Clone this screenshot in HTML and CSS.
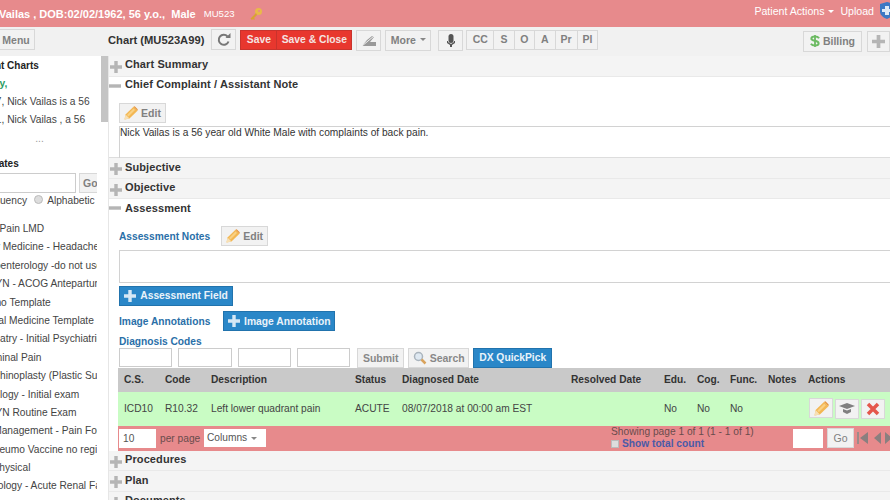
FILE: index.html
```html
<!DOCTYPE html>
<html lang="en">
<head>
<meta charset="utf-8">
<title>Chart</title>
<link rel="stylesheet" href="styles.css">
</head>
<body>
<svg class="defs" width="0" height="0" aria-hidden="true">
  <symbol id="plus" viewBox="0 0 14 14"><path d="M5 0h4v5h5v4H9v5H5V9H0V5h5z" fill="#b5b5b5"/></symbol>
  <symbol id="minus" viewBox="0 0 14 14"><rect y="5" width="14" height="4" fill="#b5b5b5"/></symbol>
  <symbol id="pencil" viewBox="0 0 14 14"><path d="M0.500 13.500l1-5L9.500 .8l4 4-8 7.700z" fill="#f3b753"/><path d="M.5 13.500l1-5 4 4z" fill="#f7e0b5"/><path d="M3 9l6.500-6.500 1.500 1.500L4.500 10.500z" fill="#f9d184"/><path d="M9.500 .8l1.200-.5 3 3-.2 1.500z" fill="#e5923a"/></symbol>
  <symbol id="wplus" viewBox="0 0 14 14"><path d="M5 0h4v5h5v4H9v5H5V9H0V5h5z" fill="#d6e8f5"/></symbol>
</svg>
<header class="topbar">
  <div class="patient">Vailas , DOB:02/02/1962, 56 y.o., &nbsp;Male <span class="mrn">MU523</span>
    <svg class="key" width="14" height="14" viewBox="0 0 14 14"><circle cx="9.500" cy="4.500" r="3.500" fill="#e9b949"/><path d="M7 6L1.500 11.500 3 13l1-1 1 1 1-1-1-1 3-3z" fill="#d9a233"/><circle cx="10" cy="4" r="1" fill="#e88a8c"/></svg>
  </div>
  <nav class="topnav">
    <span>Patient Actions <i class="caret"></i></span>
    <span>Upload</span>
    <svg class="shield" width="14" height="17" viewBox="0 0 14 17"><path d="M0 2l7-2 7 2v8c0 3-4 6-7 7-3-1-7-4-7-7z" fill="#3d78c4"/><path d="M5 4h4v3h3v3H9v3H5v-3H2V7h3z" fill="#dfeaf6"/></svg>
  </nav>
</header>
<div class="toolbar">
  <button class="btn menu">Menu</button>
  <strong class="chart-title">Chart (MU523A99)</strong>
  <button class="btn refresh"><svg width="14" height="14" viewBox="0 0 14 14"><path d="M11.500 8.500A5 5 0 1 1 10.500 3.500" fill="none" stroke="#777" stroke-width="2"/><path d="M8.500 5h5V0z" fill="#777"/></svg></button>
  <div class="save-group"><button class="save">Save</button><button class="saveclose">Save &amp; Close</button></div>
  <button class="btn sign"><svg width="16" height="12" viewBox="0 0 16 12"><path d="M1 11l5-6 5-4 2 1-4 5 6 0v4z" fill="#999"/><path d="M1 11L13 1" stroke="#eee"/></svg></button>
  <button class="btn more">More <i class="caret dark"></i></button>
  <button class="btn mic"><svg width="8" height="13" viewBox="0 0 8 13"><rect x="1.500" width="5" height="9" rx="2.500" fill="#555"/><path d="M0 7h1v1l3 2 3-2V7h1v2l-3 2v2H3v-2L0 9z" fill="#555"/></svg></button>
  <div class="seg"><span class="s-cc">CC</span><span class="s-s">S</span><span class="s-o">O</span><span class="s-a">A</span><span class="s-pr">Pr</span><span class="s-pl">Pl</span></div>
  <div class="toolbar-right">
    <button class="btn billing"><svg width="10" height="12" viewBox="0 0 11 13"><path d="M10 3.500C9 2 7.500 1.500 5.500 1.500 3 1.500 1.500 2.500 1.500 4 1.500 7 9.500 5.500 9.500 9 9.500 10.500 8 11.500 5.500 11.500 3.500 11.500 2 11 1 9.500" fill="none" stroke="#6dbb63" stroke-width="2.200"/><rect x="4.500" width="2" height="13" fill="#6dbb63"/></svg> Billing</button>
    <button class="btn addbtn"><svg width="13" height="13"><use href="#plus"/></svg></button>
  </div>
</div>
<div class="workspace">
  <aside class="sidebar">
    <div class="side-clip">
      <div class="side-inner">
        <h4 class="recent-title">Recent Charts</h4>
        <p class="green">Today,</p>
        <p class="note">08/07, Nick Vailas is a 56</p>
        <p class="note">08/01, Nick Vailas , a 56</p>
        <p class="dots">...</p>
        <h4 class="tmpl-title">Templates</h4>
        <div class="tmpl-search"><input class="tmpl-input" type="text"><button class="btn go">Go</button></div>
        <div class="sort"><i class="radio first"></i><span>Frequency</span><i class="radio"></i><span>Alphabetic</span></div>
        <ul class="tmpl-list">
          <li>Chest Pain LMD</li>
          <li>Family Medicine - Headache</li>
          <li>Gastroenterology -do not use</li>
          <li>OB/GYN - ACOG Antepartum</li>
          <li>Mammo Template</li>
          <li>General Medicine Template</li>
          <li>Psychiatry - Initial Psychiatric</li>
          <li>Abdominal Pain</li>
          <li>Septorhinoplasty (Plastic Surgery)</li>
          <li>Cardiology - Initial exam</li>
          <li>OB/GYN Routine Exam</li>
          <li>Pain Management - Pain Form</li>
          <li>Flu Pneumo Vaccine no regimen</li>
          <li>Well Physical</li>
          <li>Nephrology - Acute Renal Failure</li>
        </ul>
      </div>
    </div>
    <div class="scrollbar"></div>
  </aside>
  <main class="main">
    <div class="sec closed"><svg class="ico"><use href="#plus"/></svg>Chart Summary</div>
    <div class="sec open chief"><svg class="ico"><use href="#minus"/></svg>Chief Complaint / Assistant Note</div>
    <div class="panel cc">
      <button class="btn edit"><svg width="14" height="14"><use href="#pencil"/></svg> Edit</button>
      <div class="notebox short">Nick Vailas is a 56 year old White Male with complaints of back pain.</div>
    </div>
    <div class="sec closed"><svg class="ico"><use href="#plus"/></svg>Subjective</div>
    <div class="sec closed"><svg class="ico"><use href="#plus"/></svg>Objective</div>
    <div class="sec open"><svg class="ico"><use href="#minus"/></svg>Assessment</div>
    <div class="panel assess">
      <div class="label-row"><span class="blue-label">Assessment Notes</span><button class="btn edit"><svg width="14" height="14"><use href="#pencil"/></svg> Edit</button></div>
      <div class="notebox tall"></div>
      <button class="btn primary field"><svg width="12" height="12"><use href="#wplus"/></svg> Assessment Field</button>
      <div class="label-row img-row"><span class="blue-label">Image Annotations</span><button class="btn primary"><svg width="12" height="12"><use href="#wplus"/></svg> Image Annotation</button></div>
      <div class="blue-label dx-label">Diagnosis Codes</div>
      <div class="dx-row">
        <input class="dx" type="text"><input class="dx" type="text"><input class="dx" type="text"><input class="dx" type="text">
        <button class="btn soft submit">Submit</button>
        <button class="btn soft search"><svg width="14" height="14" viewBox="0 0 14 14"><circle cx="5.500" cy="5.500" r="4" fill="#dfe9f2" stroke="#aab4bd" stroke-width="1.500"/><path d="M8.500 8.500l4 4" stroke="#d9a35c" stroke-width="2.500"/></svg> Search</button>
        <button class="btn primary quick">DX QuickPick</button>
      </div>
      <table class="grid">
        <colgroup><col class="c1"><col class="c2"><col class="c3"><col class="c4"><col class="c5"><col class="c6"><col class="c7"><col class="c8"><col class="c9"><col class="c10"><col></colgroup>
        <thead><tr><th>C.S.</th><th>Code</th><th>Description</th><th>Status</th><th>Diagnosed Date</th><th>Resolved Date</th><th>Edu.</th><th>Cog.</th><th>Func.</th><th>Notes</th><th>Actions</th></tr></thead>
        <tbody><tr>
          <td>ICD10</td><td>R10.32</td><td>Left lower quadrant pain</td><td>ACUTE</td><td>08/07/2018 at 00:00 am EST</td><td></td><td>No</td><td>No</td><td>No</td><td></td>
          <td class="actions">
            <button class="btn act"><svg width="15" height="15"><use href="#pencil"/></svg></button>
            <button class="btn act"><svg width="16" height="14" viewBox="0 0 16 14"><path d="M0 4l8-3 8 3-8 3z" fill="#808080"/><path d="M4 7l4 1.500L12 7v3l-4 2-4-2z" fill="#808080"/></svg></button>
            <button class="btn act"><svg width="14" height="14" viewBox="0 0 14 14"><path d="M2 2l10 10M12 2L2 12" stroke="#e4574c" stroke-width="3.500"/></svg></button>
          </td>
        </tr></tbody>
      </table>
      <div class="pager">
        <input class="perpage" type="text" value="10">
        <span class="pp-label">per page</span>
        <span class="columns">Columns <i class="caret dark"></i></span>
        <div class="showing"><div>Showing page 1 of 1 (1 - 1 of 1)</div><label><i class="check"></i><b>Show total count</b></label></div>
        <input class="pageno" type="text">
        <button class="btn gobtn">Go</button>
        <svg class="nav" width="34" height="14" viewBox="0 0 34 14"><rect x="0" y="1" width="2" height="12" fill="#9c8a8a"/><path d="M11 1v12L3 7zM24 1v12l-7-6zM28 1v12l7-6z" fill="#8a7f7f"/></svg>
      </div>
    </div>
    <div class="sec closed"><svg class="ico"><use href="#plus"/></svg>Procedures</div>
    <div class="sec closed"><svg class="ico"><use href="#plus"/></svg>Plan</div>
    <div class="sec closed"><svg class="ico"><use href="#plus"/></svg>Documents</div>
  </main>
</div>
</body>
</html>
```
FILE: styles.css
```css
* { box-sizing: border-box; }
html, body { margin: 0; height: 100%; overflow: hidden; }
body { width: 890px; height: 500px; background: #fff; font: 10.200px "Liberation Sans", Arial, sans-serif; color: #333; }
.defs { position: absolute; }
button { font-family: inherit; }
svg { flex: none; }

.topbar { height: 27px; background: #e78a8c; color: #fff; display: flex; justify-content: space-between; align-items: center; overflow: hidden; }
.patient { margin-left: -1px; font-size: 11px; font-weight: bold; white-space: nowrap; display: flex; align-items: center; gap: 4px; height: 25px; }
.mrn { font-weight: normal; font-size: 9.600px; margin-left: 4px; }
.key { margin-left: 10px; }
.topnav { display: flex; align-items: center; font-size: 10.600px; white-space: nowrap; margin-top: -6px; }
.topnav span:first-child { margin-right: 6px; }
.shield { margin: 0 -4px 0 6px; }
.caret { display: inline-block; width: 0; height: 0; border: 3px solid transparent; border-top-color: #fff; border-bottom: 0; vertical-align: middle; margin-left: 1px; }
.caret.dark { border-top-color: #888; }

.toolbar { height: 29px; background: #f1f1f1; display: flex; align-items: flex-start; white-space: nowrap; padding-top: 3px; }
.btn { border: 1px solid #d8d8d8; background: #f2f2f2; color: #808080; font-size: 10.500px; font-weight: bold; height: 20px; padding: 0 5px; display: inline-flex; align-items: center; justify-content: center; gap: 3px; white-space: nowrap; }
.menu { width: 38px; margin-left: -3px; margin-top: -1px; height: 21px; }
.chart-title { margin-left: 73px; font-size: 11.200px; color: #333; line-height: 21px; }
.refresh { width: 25px; height: 21px; margin-left: 7px; margin-top: -1px; }
.save-group { display: flex; margin-left: 4px; height: 20px; width: 112px; background: #e8372e; border: 1px solid #c9332c; }
.save-group button { border: 0; background: transparent; color: #f4e4e2; font-size: 10.300px; font-weight: bold; padding: 0 0 2px; }
.save { width: 35px; }
.saveclose { flex: 1; border-left: 1px solid #c9332c !important; }
.sign { width: 25px; height: 21px; margin-left: 4px; padding: 0; }
.more { width: 46px; height: 21px; margin-left: 4px; padding: 0 0 2px; }
.mic { width: 25px; height: 21px; margin-left: 7px; padding: 0; }
.seg { display: flex; margin-left: 3px; height: 20px; width: 132px; border: 1px solid #d8d8d8; background: #f2f2f2; color: #808080; font-weight: bold; font-size: 10.500px; }
.seg span { line-height: 17px; border-left: 1px solid #d8d8d8; text-align: center; }
.seg span:first-child { border-left: 0; }
.s-cc { width: 26px; } .s-s { width: 21px; } .s-o { width: 20px; } .s-a { width: 21px; } .s-pr { width: 22px; } .s-pl { width: 21px; }
.toolbar-right { margin-left: auto; display: flex; gap: 5px; margin-top: 1px; }
.billing { width: 59px; height: 21px; font-size: 10.500px; padding: 0 0 1px; }
.addbtn { width: 23px; height: 21px; padding: 0; }

.workspace { display: flex; height: 444px; }
.sidebar { width: 109px; flex: none; position: relative; overflow: hidden; border-right: 1px solid #e6e6e6; }
.side-clip { width: 97px; height: 100%; overflow: hidden; }
.side-inner { width: 200px; margin-left: -30px; color: #444; white-space: nowrap; }
.recent-title, .tmpl-title { margin: 0; font-size: 10px; font-weight: bold; color: #222; line-height: 13px; }
.recent-title { padding-top: 3px; margin-left: 1px; }
.side-inner p { margin: 0 0 0 6px; line-height: 18px; }
.green { color: #2a9d63; font-weight: bold; margin-top: 3px !important; }
.dots { width: 127px; text-align: center; color: #999; margin-top: 1px !important; }
.tmpl-title { margin-top: 9px; }
.tmpl-search { display: flex; margin-top: 3px; height: 20px; }
.tmpl-input { width: 106px; height: 20px; border: 1px solid #ccc; }
.go { width: 24px; height: 20px; margin-left: 3px; padding: 0 3px; justify-content: flex-start; }
.sort { display: flex; align-items: center; height: 15px; }
.radio { width: 9px; height: 9px; border-radius: 50%; background: #ddd; border: 1px solid #bbb; margin: -3px 4px 0 7px; flex: none; }
.radio.first { margin-left: 0; margin-right: 0; }
.tmpl-list { list-style: none; padding: 0; margin: 12px 0 0; }
.tmpl-list li { line-height: 18.400px; height: 18.400px; }
.scrollbar { position: absolute; left: 101px; top: 0; width: 7px; height: 66px; background: #c4c4c4; }

.main { flex: 1; min-width: 0; overflow: hidden; }
.sec { height: 20.500px; display: flex; align-items: center; font-size: 11px; font-weight: bold; color: #333; border-bottom: 1px solid #e9e9e9; white-space: nowrap; letter-spacing: .1px; padding: 0 0 2px 16px; position: relative; }
.sec:first-child { padding-bottom: 4px; }
.sec.closed { background: #f4f4f4; }
.sec.open { background: #fff; border-bottom: 0; }
.sec.chief { padding-bottom: 6px; }
.ico { position: absolute; left: 1px; top: 5px; width: 12px; height: 12px; }
.open .ico { top: 3px; left: 0; }
.panel { padding-left: 10px; }
.cc { height: 61px; padding-top: 6px; border-bottom: 1px solid #ddd; }
.edit { height: 20px; width: 47px; padding: 0; }
.notebox { border: 1px solid #d2d2d2; border-right: 0; font-size: 10.200px; color: #333; line-height: 12px; padding: 0; }
.short { height: 32px; margin-top: 3px; border-bottom: 0; }
.assess { padding-top: 6px; }
.label-row { display: flex; align-items: center; height: 21px; gap: 11px; }
.blue-label { color: #2a6fa8; font-size: 10.200px; font-weight: bold; white-space: nowrap; }
.tall { height: 33px; margin-top: 3px; }
.primary { background: #2a87c8; border: 1px solid #2173ad; color: #e9f3fa; height: 20px; font-size: 10.300px; padding: 0; gap: 4px; }
.field { width: 114px; margin-top: 3px; display: flex; }
.img-row { margin-top: 5px; gap: 13px; }
.img-row .primary { width: 112px; }
.dx-label { line-height: 13px; margin-top: 3px; }
.dx-row { display: flex; align-items: flex-start; height: 20px; }
.dx { width: 53.300px; height: 19px; border: 1px solid #ccc; margin-right: 6px; flex: none; }
.soft { height: 20px; color: #888; }
.submit { width: 47px; margin-left: 1px; padding: 0; }
.search { width: 61px; margin-left: 4px; padding: 0; }
.quick { width: 79px; margin-left: 4px; }
.grid { border-collapse: collapse; table-layout: fixed; width: 772px; font-size: 10.200px; margin-left: -1px; }
.grid th { background: #c9c9c9; height: 24px; text-align: left; font-weight: bold; color: #333; padding: 0 0 0 6px; white-space: nowrap; font-size: 10.200px; }
.grid td { background: #c9fcc4; height: 34px; padding: 0 0 0 6px; color: #444; white-space: nowrap; }
.c1 { width: 41px; } .c2 { width: 46px; } .c3 { width: 144px; } .c4 { width: 47px; } .c5 { width: 169px; }
.c6 { width: 93px; } .c7 { width: 33px; } .c8 { width: 33px; } .c9 { width: 38px; } .c10 { width: 40px; }
.grid td.actions { padding: 0 0 0 7px; white-space: nowrap; font-size: 0; }
.act { width: 24px; height: 20px; padding: 0; margin-right: 2px; }
.pager { background: #e78a8c; height: 25px; margin-left: -1px; display: flex; align-items: center; position: relative; font-size: 10.200px; color: #6a4c4c; white-space: nowrap; }
.perpage { width: 37px; height: 19px; border: 0; padding: 0 4px; font: 10.200px "Liberation Sans", sans-serif; color: #555; margin-left: 1px; flex: none; }
.pp-label { margin-left: 4px; width: 40px; flex: none; }
.columns { background: #fff; width: 62px; height: 18px; line-height: 18px; margin-left: 4px; padding-left: 3px; flex: none; color: #555; }
.showing { margin-left: 345px; line-height: 12px; width: 182px; flex: none; }
.showing label { display: flex; align-items: center; color: #4a5ba8; }
.check { width: 8px; height: 8px; background: #ddd; border: 1px solid #bbb; margin-right: 3px; }
.pageno { width: 30px; height: 19px; border: 0; flex: none; }
.gobtn { width: 27px; height: 20px; margin-left: 4px; font-weight: normal; flex: none; }
.nav { margin-left: 3px; flex: none; }
```
